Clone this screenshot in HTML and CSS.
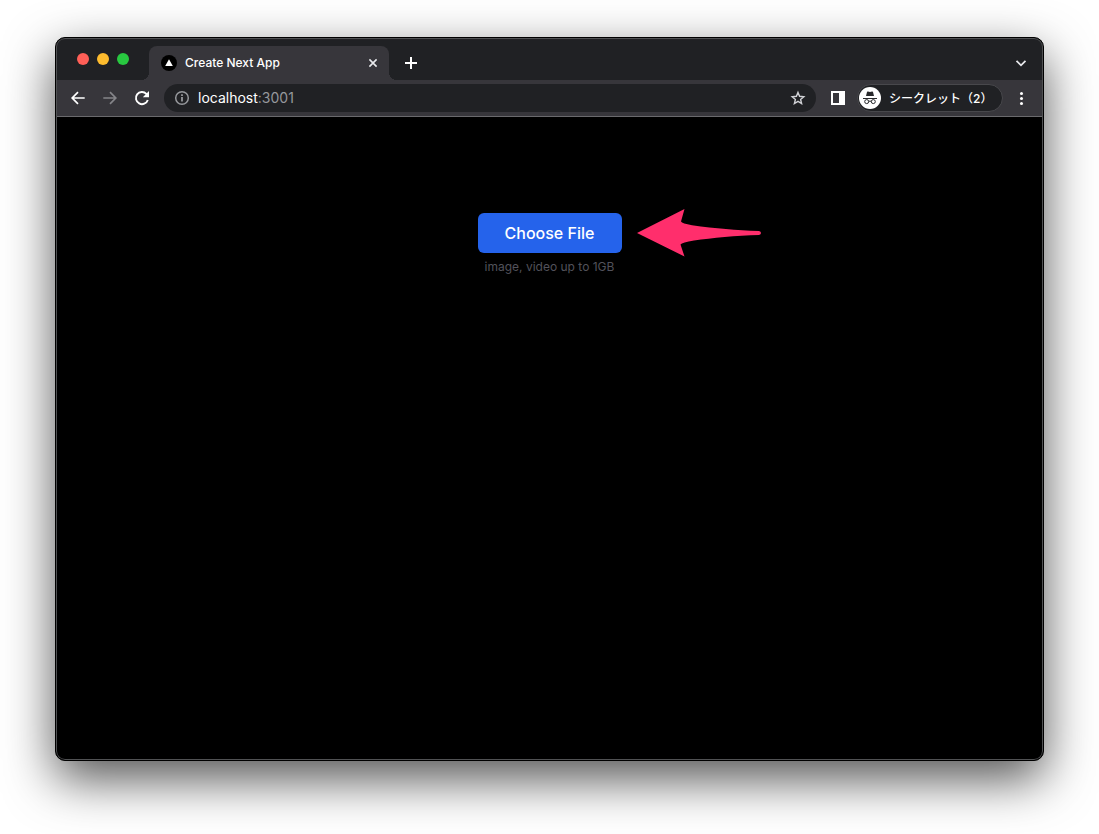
FILE: index.html
```html
<!DOCTYPE html>
<html lang="en">
<head>
<meta charset="utf-8">
<title>Create Next App</title>
<link rel="stylesheet" href="styles.css">
</head>
<body>
<div class="window">
  <header class="tabstrip">
    <div class="lights">
      <button class="light light-close" aria-label="Close window"></button>
      <button class="light light-min" aria-label="Minimize window"></button>
      <button class="light light-max" aria-label="Maximize window"></button>
    </div>
    <div class="tab">
      <svg class="favicon" viewBox="0 0 16 16" width="16" height="16" aria-hidden="true"><circle cx="8" cy="8" r="8" fill="#000"/><path d="M8 4.2 11.8 11H4.2z" fill="#fff"/></svg>
      <span class="tab-title">Create Next App</span>
      <button class="icon-btn tab-close" aria-label="Close tab"><svg viewBox="0 0 16 16" width="16" height="16"><path d="m4.4 4.4 7.2 7.2m0-7.2-7.2 7.2" stroke="#e8e9ec" stroke-width="1.6"/></svg></button>
    </div>
    <button class="icon-btn new-tab" aria-label="New tab"><svg viewBox="0 0 16 16" width="16" height="16"><path d="M8 2v12M2 8h12" stroke="#fff" stroke-width="2"/></svg></button>
    <button class="icon-btn tab-search" aria-label="Search tabs"><svg viewBox="0 0 16 16" width="16" height="16"><path d="m3.5 5.8 4.500 4.500 4.500-4.500" fill="none" stroke="#e8e9ec" stroke-width="1.8"/></svg></button>
  </header>
  <nav class="toolbar">
    <div class="nav-buttons">
      <button class="icon-btn" aria-label="Back"><svg viewBox="0 0 16 16" width="16" height="16"><path d="M14.700 8H2.400M8 2.200 2.200 8 8 13.800" fill="none" stroke="#fff" stroke-width="1.7"/></svg></button>
      <button class="icon-btn" aria-label="Forward"><svg viewBox="0 0 16 16" width="16" height="16"><path d="M1.300 8h12.300M8 2.200 13.800 8 8 13.800" fill="none" stroke="#858589" stroke-width="1.7"/></svg></button>
      <button class="icon-btn" aria-label="Reload"><svg viewBox="0 0 16 16" width="16" height="16"><path d="M13.800 10A6.100 6.100 0 1 1 12.400 3.800L14 5.500" fill="none" stroke="#fff" stroke-width="1.9"/><path d="M15 1v6.200H8.800z" fill="#fff"/></svg></button>
    </div>
    <div class="omnibox">
      <svg class="info" viewBox="0 0 16 16" width="16" height="16" aria-hidden="true"><circle cx="8" cy="8" r="6.300" fill="none" stroke="#96989c" stroke-width="1.5"/><path d="M8 7v4.400M8 4.300V6" stroke="#96989c" stroke-width="1.8"/></svg>
      <span class="url">localhost<span class="port">:3001</span></span>
      <button class="icon-btn" aria-label="Bookmark this page"><svg viewBox="0 0 16 16" width="16" height="16"><path d="m8 2.400 1.600 3.900 4.200.4-3.200 2.700 1 4.100L8 11.300l-3.600 2.200 1-4.100-3.200-2.700 4.200-.4z" fill="none" stroke="#d0d1d5" stroke-width="1.4"/></svg></button>
    </div>
    <button class="icon-btn" aria-label="Side panel"><svg viewBox="0 0 16 16" width="16" height="16"><path d="M1 1h14v14H1zM3 3v10h6V3z" fill="#fff" fill-rule="evenodd"/></svg></button>
    <button class="profile">
      <svg viewBox="0 0 22 22" width="22" height="22" aria-hidden="true"><circle cx="11" cy="11" r="11" fill="#fff"/><path d="M7 9 8 5c.1-.5.5-.7 1-.5l2 .5 2-.5c.5-.2.900 0 1 .5l1 4z" fill="#28292c"/><path d="M4 11.500h14" stroke="#28292c"/><g fill="none" stroke="#28292c"><circle cx="7.700" cy="14.600" r="2"/><circle cx="14.300" cy="14.600" r="2"/><path d="M9.700 14.400q1.300-.7 2.600 0"/></g></svg>
      <span class="profile-name">シークレット（2）</span>
    </button>
    <button class="icon-btn menu" aria-label="Menu"><svg viewBox="0 0 16 16" width="16" height="16" fill="#fff"><circle cx="8.500" cy="3.500" r="1.500"/><circle cx="8.500" cy="8.500" r="1.500"/><circle cx="8.500" cy="13.500" r="1.500"/></svg></button>
  </nav>
  <main class="page">
    <div class="upload">
      <button class="choose">Choose File</button>
      <svg class="pointer" viewBox="0 0 126 50" width="126" height="50" aria-hidden="true"><path d="M1 25 48.500 1 45 13.500Q46 15.500 56 17.200C80 20.500 100 22 123 23Q125 23.400 125 25T123 27C100 27.500 76 30 58 32.500Q46 34.500 44.500 36.500L48.500 48.500Z" fill="#ff2e6c"/></svg>
    </div>
    <p class="hint">image, video up to 1GB</p>
  </main>
</div>
</body>
</html>
```
FILE: styles.css
```css
* {
  box-sizing: border-box;
}

body {
  margin: 0;
  min-height: 100vh;
  padding: 37px 55px 73px;
  display: flex;
  background: #fff;
  font-family: Inter, "Noto Sans CJK JP", sans-serif;
}

button {
  border: 0;
  padding: 0;
  background: none;
  color: inherit;
  font: inherit;
  cursor: pointer;
}

svg {
  display: block;
  flex: none;
}

.window {
  position: relative;
  flex: 1;
  min-width: 0;
  display: flex;
  flex-direction: column;
  border: 1px solid #000;
  border-radius: 10px;
  overflow: hidden;
  background: #000;
  color: #fff;
  box-shadow: 0 18px 50px rgba(0, 0, 0, 0.68);
}

/* light inner edge of the window frame */
.window::after {
  content: "";
  position: absolute;
  inset: 0;
  border: 1px solid #505153;
  border-radius: 9px;
  pointer-events: none;
}

.icon-btn {
  flex: none;
}

.tabstrip {
  display: flex;
  align-items: flex-end;
  height: 42px;
  padding: 0 14px 0 21px;
  background: #202124;
}

.lights {
  display: flex;
  align-items: center;
  gap: 8px;
  height: 42px;
  margin-right: 20px;
}

.light {
  width: 12px;
  height: 12px;
  border-radius: 50%;
}

.light-close {
  background: #ff5f57;
}

.light-min {
  background: #febc2e;
}

.light-max {
  background: #28c840;
}

.tab {
  position: relative;
  display: flex;
  align-items: center;
  width: 240px;
  height: 34px;
  padding: 0 8px 0 12px;
  border-radius: 8px 8px 0 0;
  background: #37363b;
  font-size: 12px;
  font-weight: 500;
}

/* flared feet of the active tab */
.tab::before,
.tab::after {
  content: "";
  position: absolute;
  bottom: 0;
  width: 8px;
  height: 8px;
}

.tab::before {
  right: 100%;
  background: radial-gradient(circle at 0 0, #202124 8px, #37363b 8px);
}

.tab::after {
  left: 100%;
  background: radial-gradient(circle at 100% 0, #202124 8px, #37363b 8px);
}

.tab-title,
.url,
.profile-name {
  padding-bottom: 2px;
}

.tab-title {
  flex: 1;
  margin-left: 8px;
}

.new-tab {
  margin: 0 0 9px 14px;
}

.tab-search {
  margin: 0 0 9px auto;
}

.toolbar {
  display: flex;
  align-items: center;
  height: 37px;
  padding: 0 14px;
  border-bottom: 1px solid #6a6a6d;
  background: #37363b;
}

.nav-buttons {
  display: flex;
  gap: 16px;
  margin-right: 14px;
}

.omnibox {
  flex: 1;
  display: flex;
  align-items: center;
  height: 28px;
  margin-right: 14px;
  padding: 0 10px;
  border-radius: 14px;
  background: #202124;
}

.url {
  flex: 1;
  margin-left: 8px;
  font-size: 14px;
}

.port {
  color: #96989c;
}

.profile {
  display: flex;
  align-items: center;
  gap: 8px;
  width: 146px;
  height: 28px;
  margin: 0 10px 0 11px;
  padding-left: 1px;
  border: 1px solid #48484c;
  border-radius: 14px;
  background: #202124;
  font-size: 12px;
  font-weight: 500;
  white-space: nowrap;
}

.page {
  flex: 1;
  display: flex;
  flex-direction: column;
  align-items: center;
  padding-top: 96px;
}

.upload {
  position: relative;
}

.choose {
  display: block;
  width: 144px;
  height: 40px;
  border-radius: 6px;
  background: #2563eb;
  font-size: 16px;
  font-weight: 500;
}

.pointer {
  position: absolute;
  left: calc(100% + 14px);
  top: -5px;
}

.hint {
  margin: 6px 0 0;
  color: #52525b;
  font-size: 12px;
  line-height: 16px;
}
```
